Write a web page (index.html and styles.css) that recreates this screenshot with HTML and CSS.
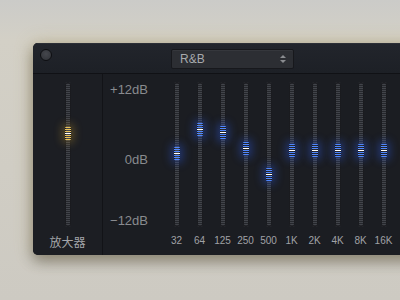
FILE: index.html
```html
<!DOCTYPE html>
<html lang="en">
<head>
    <meta charset="UTF-8">
    <title>Equalizer</title>
    <link rel="stylesheet" href="styles.css">
</head>
<body>
    <div class="window">
        <div class="titlebar">
            <div class="close"></div>
            <div class="preset">
                <span>R&amp;B</span>
                <span class="arrows"><i class="up"></i><i class="down"></i></span>
            </div>
        </div>
        <div class="content">
            <div class="amp">
                <div class="track"><div class="thumb gold" style="top: 45px"></div></div>
                <div class="amp-label">放大器</div>
            </div>
            <div class="bands">
                <div class="scale">
                    <span>+12dB</span>
                    <span>0dB</span>
                    <span>&minus;12dB</span>
                </div>
                <div class="band"><div class="track"><div class="thumb" style="top: 65px"></div></div><span>32</span></div>
                <div class="band"><div class="track"><div class="thumb" style="top: 41px"></div></div><span>64</span></div>
                <div class="band"><div class="track"><div class="thumb" style="top: 44px"></div></div><span>125</span></div>
                <div class="band"><div class="track"><div class="thumb" style="top: 60px"></div></div><span>250</span></div>
                <div class="band"><div class="track"><div class="thumb" style="top: 86px"></div></div><span>500</span></div>
                <div class="band"><div class="track"><div class="thumb" style="top: 62px"></div></div><span>1K</span></div>
                <div class="band"><div class="track"><div class="thumb" style="top: 62px"></div></div><span>2K</span></div>
                <div class="band"><div class="track"><div class="thumb" style="top: 62px"></div></div><span>4K</span></div>
                <div class="band"><div class="track"><div class="thumb" style="top: 62px"></div></div><span>8K</span></div>
                <div class="band"><div class="track"><div class="thumb" style="top: 62px"></div></div><span>16K</span></div>
            </div>
        </div>
    </div>
</body>
</html>
```

FILE: styles.css
```css
* {
    margin: 0;
    padding: 0;
    box-sizing: border-box;
}

body {
    background: linear-gradient(to bottom, #cbcbc8 0, #d3d0c6 40px, #cdcac2 100%);
    height: 300px;
    overflow: hidden;
    font-family: "Liberation Sans", Arial, sans-serif;
}

.window {
    margin: 43px 0 0 33px;
    width: 420px;
    height: 212px;
    background: #1b1d22;
    border-radius: 5px;
    box-shadow: 0 0 18px rgba(190, 170, 110, 0.45), 0 6px 14px rgba(0, 0, 0, 0.4);
    overflow: hidden;
}

.titlebar {
    height: 31px;
    display: flex;
    align-items: flex-start;
    padding: 6px 0 0 7px;
    background: linear-gradient(to bottom, #22252c, #1d2026);
    border-bottom: 1px solid #101115;
    box-shadow: inset 0 1px 0 #2c2f36;
}

.close {
    width: 12px;
    height: 12px;
    border-radius: 50%;
    background: radial-gradient(circle at 50% 40%, #45474d, #2f3136);
    border: 1px solid #0e0f12;
}

.preset {
    margin-left: 119px;
    width: 123px;
    height: 20px;
    display: flex;
    align-items: center;
    justify-content: space-between;
    padding: 0 7px 0 8px;
    background: #2c2e33;
    border: 1px solid #17181c;
    border-radius: 2px;
    box-shadow: inset 0 1px 0 #35373c;
    color: #a7a9ad;
    font-size: 12px;
}

.arrows {
    display: flex;
    flex-direction: column;
    gap: 2px;
}

.arrows i {
    width: 0;
    height: 0;
    border-left: 3px solid transparent;
    border-right: 3px solid transparent;
}

.arrows .up {
    border-bottom: 3px solid #8a8c90;
}

.arrows .down {
    border-top: 3px solid #8a8c90;
}

.content {
    display: flex;
    height: 181px;
}

.amp {
    width: 70px;
    display: flex;
    flex-direction: column;
    align-items: center;
    padding-top: 8px;
    border-right: 1px solid #121317;
    background: #1c1e23;
}

.track {
    position: relative;
    width: 6px;
    height: 145px;
    border-radius: 3px;
    background:
        repeating-linear-gradient(to bottom, rgba(120, 124, 132, 0.35) 0 1px, transparent 1px 2px),
        #25272c;
    box-shadow: inset 0 0 0 1px #1a1b1f;
}

.thumb {
    position: absolute;
    left: 0;
    width: 6px;
    height: 13px;
    background:
        linear-gradient(to bottom, transparent 6px, #ffffff 6px 7px, transparent 7px),
        repeating-linear-gradient(to bottom, #4f86ff 0 1px, transparent 1px 2px);
    box-shadow: 0 0 8px 3px rgba(50, 100, 255, 0.35);
    border-radius: 1px;
}

.thumb.gold {
    background:
        linear-gradient(to bottom, transparent 6px, #ffffff 6px 7px, transparent 7px),
        repeating-linear-gradient(to bottom, #e8c15a 0 1px, transparent 1px 2px);
    box-shadow: 0 0 8px 3px rgba(220, 170, 50, 0.3);
}

.amp-label {
    margin-top: 6px;
    color: #a3a5a9;
    font-family: "Noto Sans CJK SC", sans-serif;
    font-size: 12px;
}

.bands {
    display: flex;
    padding-top: 8px;
}

.scale {
    width: 45px;
    margin-right: 17px;
    color: #898b8f;
    font-size: 13px;
    text-align: right;
}

.scale span {
    display: block;
    line-height: 15px;
}

.scale span:nth-child(2) {
    margin-top: 55px;
}

.scale span:nth-child(3) {
    margin-top: 46px;
}

.band {
    width: 23px;
    display: flex;
    flex-direction: column;
    align-items: center;
}

.band span {
    margin-top: 8px;
    color: #a0a2a6;
    font-size: 10px;
}
```
